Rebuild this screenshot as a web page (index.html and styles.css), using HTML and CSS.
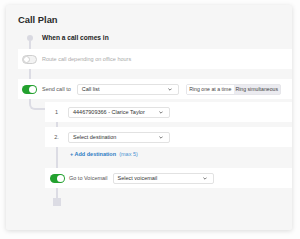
FILE: index.html
```
<!DOCTYPE html>
<html>
<head>
<meta charset="utf-8">
<link rel="stylesheet" href="styles.css">
</head>
<body>
<div class="card">
  <div class="title">Call Plan</div>
  <div class="start"><span class="dot"></span><span class="start-text">When a call comes in</span></div>
  <div class="stem stem-a"></div>
  <div class="band">
    <span class="toggle off"><span class="knob"></span></span>
    <span class="label muted">Route call depending on office hours</span>
  </div>
  <div class="stem stem-b"></div>
  <div class="band">
    <span class="toggle on"><span class="knob"></span></span>
    <span class="label">Send call to</span>
    <span class="select sel-call"><span>Call list</span><svg class="chev" width="4" height="3" viewBox="0 0 4 3"><polyline points="0.4,0.6 2,2.2 3.6,0.6" fill="none" stroke="#555" stroke-width="0.8"/></svg></span>
    <span class="seg">
      <span class="seg-item active">Ring one at a time</span>
      <span class="seg-item">Ring simultaneous</span>
    </span>
  </div>
  <div class="nested">
    <div class="elbow-col"><div class="elbow"></div></div>
    <div class="nested-col">
      <div class="band nrow">
        <span class="num">1</span>
        <span class="select sel-dest"><span>44467909366 - Clarice Taylor</span><svg class="chev" width="4" height="3" viewBox="0 0 4 3"><polyline points="0.4,0.6 2,2.2 3.6,0.6" fill="none" stroke="#555" stroke-width="0.8"/></svg></span>
      </div>
      <div class="link link-short"></div>
      <div class="band nrow">
        <span class="num">2.</span>
        <span class="select sel-dest"><span>Select destination</span><svg class="chev" width="4" height="3" viewBox="0 0 4 3"><polyline points="0.4,0.6 2,2.2 3.6,0.6" fill="none" stroke="#555" stroke-width="0.8"/></svg></span>
      </div>
      <div class="link link-add">
        <span class="add"><b>+ Add destination</b>&nbsp;&nbsp;<span class="max">(max 5)</span></span>
      </div>
      <div class="band vrow">
        <span class="toggle on"><span class="knob"></span></span>
        <span class="label">Go to Voicemail</span>
        <span class="select sel-vm"><span>Select voicemail</span><svg class="chev" width="4" height="3" viewBox="0 0 4 3"><polyline points="0.4,0.6 2,2.2 3.6,0.6" fill="none" stroke="#555" stroke-width="0.8"/></svg></span>
      </div>
      <div class="link link-end"></div>
      <div class="end-square"></div>
    </div>
  </div>
</div>
</body>
</html>
```
FILE: styles.css
```
* { box-sizing: border-box; }
html, body { margin: 0; padding: 0; }
body {
  width: 300px;
  height: 239px;
  background: #fdfdfd;
  font-family: "Liberation Sans", Arial, sans-serif;
  overflow: hidden;
}
.card {
  margin: 5px 0 0 6px;
  width: 286px;
  height: 225px;
  background: #f6f6f6;
  border-radius: 2px;
  box-shadow: 0 1px 5px rgba(0,0,0,0.14);
  padding: 9px 0 0 12px;
}
.title {
  font-size: 9.4px;
  font-weight: bold;
  line-height: 12px;
  color: #2a2a2a;
  height: 12px;
}
.start {
  margin-top: 9px;
  height: 6px;
  display: flex;
  align-items: center;
}
.dot {
  width: 6px;
  height: 6px;
  border-radius: 50%;
  background: #d9d9e1;
  margin-left: 9px;
  flex: none;
}
.start-text {
  margin-left: 9px;
  font-size: 6.6px;
  font-weight: bold;
  color: #222;
  line-height: 10px;
  white-space: nowrap;
}
.stem {
  margin-left: 11px;
  border-left: 2px solid #dcdce4;
}
.stem-a { height: 8px; }
.stem-b { height: 10px; }
.band {
  height: 20px;
  background: #fff;
  display: flex;
  align-items: center;
  padding-left: 4px;
  font-size: 5.5px;
  white-space: nowrap;
}
.toggle {
  width: 15px;
  height: 9px;
  border-radius: 5px;
  flex: none;
  display: flex;
  align-items: center;
  padding: 1px;
}
.toggle.on {
  background: #23a12f;
  justify-content: flex-end;
}
.toggle.off {
  background: #f3f3f3;
  border: 1px solid #cfcfcf;
  padding: 0;
}
.toggle .knob {
  width: 7px;
  height: 7px;
  border-radius: 50%;
  background: #fff;
}
.toggle.off .knob {
  border: 1px solid #cfcfcf;
  width: 7px;
  height: 7px;
}
.label {
  margin-left: 5px;
  color: #555;
}
.label.muted { color: #aaa; }
.select {
  height: 11px;
  border: 1px solid #e2e2e2;
  border-radius: 2px;
  background: #fff;
  display: flex;
  align-items: center;
  justify-content: space-between;
  padding: 0 6px 0 4px;
  color: #333;
  flex: none;
}
.chev { display: block; }
.sel-call { margin-left: 6px; width: 102px; }
.seg {
  margin-left: 7px;
  display: flex;
  height: 11px;
  border: 1px solid #e6e6ea;
  border-radius: 2px;
  background: #ebebf0;
  font-size: 5.2px;
  color: #444;
}
.seg-item {
  width: 46px;
  display: flex;
  align-items: center;
  justify-content: center;
}
.seg-item.active { background: #fff; width: 47px; }
.nested {
  display: flex;
  margin-left: 11px;
}
.elbow-col { width: 16px; flex: none; }
.elbow {
  height: 11px;
  border-left: 2px solid #dcdce4;
  border-bottom: 2px solid #dcdce4;
  border-bottom-left-radius: 6px;
}
.nested-col {
  flex: 1;
  padding-top: 3px;
}
.nrow { padding-left: 0; }
.num {
  width: 23px;
  text-align: center;
  color: #555;
  flex: none;
}
.sel-dest { width: 102px; }
.link {
  margin-left: 11px;
  border-left: 2px solid #dcdce4;
}
.link-short { height: 5px; }
.link-add {
  height: 21px;
  padding: 3px 0 0 12px;
  font-size: 5.5px;
  line-height: 8px;
  white-space: nowrap;
}
.add { color: #2d7cc3; }
.add b { font-weight: bold; }
.max { color: #4d93d2; }
.vrow { padding-left: 5px; }
.vrow .label { margin-left: 4px; }
.sel-vm { margin-left: 5px; width: 101px; }
.link-end { height: 10px; }
.end-square {
  margin-left: 8px;
  width: 8px;
  height: 8px;
  background: #dcdce4;
}
```
